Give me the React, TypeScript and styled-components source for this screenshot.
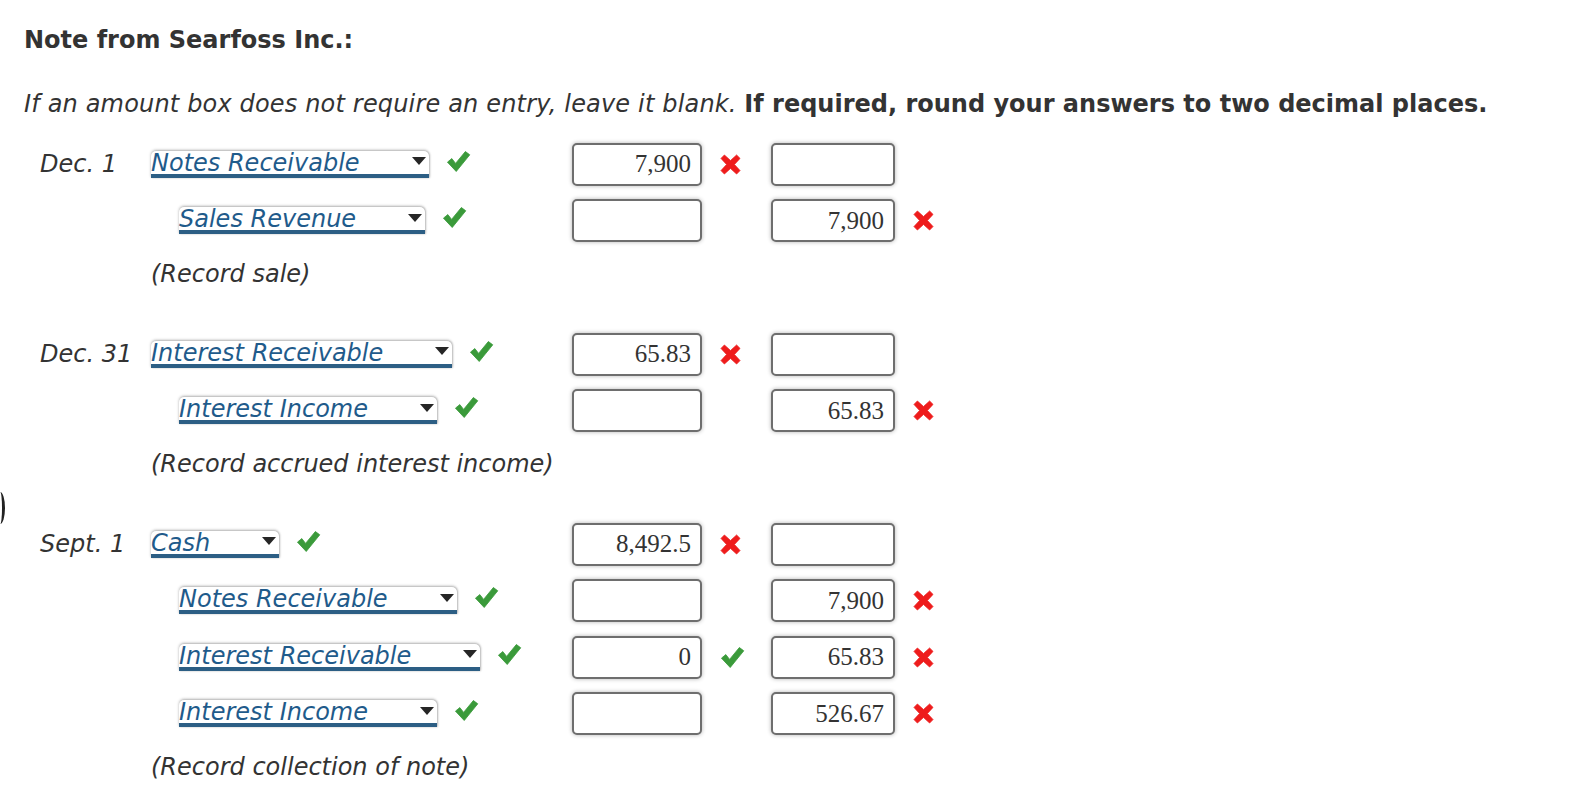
import React from "react";
import styled, { createGlobalStyle } from "styled-components";

const GlobalStyle = createGlobalStyle`
  html, body { margin: 0; padding: 0; background: #ffffff; }
  body {
    font-family: "DejaVu Sans", Verdana, sans-serif;
    color: #333333;
    overflow: hidden;
  }
`;

const Page = styled.div`
  position: relative;
  padding: 28px 0 0 24px;
  width: 1576px;
  height: 794px;
  box-sizing: border-box;
`;

const StrayParen = styled.span`
  position: absolute;
  left: -3px;
  top: 492px;
  width: 5px;
  height: 32px;
  border-right: 3px solid #222;
  border-radius: 0 60% 60% 0 / 0 50% 50% 0;
`;

const Heading = styled.h1`
  margin: 0;
  font-size: 24px;
  line-height: 24px;
  font-weight: bold;
  color: #333;
`;

const Instruction = styled.p`
  margin: 40px 0 0 0;
  font-size: 24px;
  line-height: 24px;
  color: #333;
  em { font-style: italic; letter-spacing: 0.17px; }
  strong { font-weight: bold; }
`;

const Journal = styled.div`
  margin: 20px 0 0 16px;
  display: flex;
  flex-direction: column;
`;

const Section = styled.div`
  display: flex;
  flex-direction: column;
  margin-bottom: 29px;
`;

const Row = styled.div`
  display: grid;
  grid-template-columns: 111px 421px 130px 69px 124px 60px;
  height: 56.5px;
  align-items: center;
`;

const DateLabel = styled.div`
  font-style: italic;
  font-size: 24px;
  line-height: 24px;
  color: #333;
  white-space: nowrap;
`;

const AccountCell = styled.div<{ $indent: boolean }>`
  display: flex;
  align-items: center;
  padding-left: ${(p) => (p.$indent ? "28px" : "0")};
`;

const Select = styled.div`
  display: inline-flex;
  align-items: center;
  box-sizing: border-box;
  height: 27px;
  padding-right: 3px;
  background: #fff;
  border-bottom: 4px solid #2c5e84;
  border-radius: 5px 5px 0 0;
  box-shadow: 0 -1px 3px rgba(0, 0, 0, 0.28), 1px 0 2px rgba(0, 0, 0, 0.18);
`;

const SelectText = styled.span`
  font-style: italic;
  font-size: 24px;
  line-height: 22px;
  color: #1f5b8b;
  white-space: nowrap;
  margin-top: 1px;
`;

const Arrow = styled.span`
  margin-left: 52px;
  width: 0;
  height: 0;
  border-left: 7px solid transparent;
  border-right: 7px solid transparent;
  border-top: 8px solid #262626;
  margin-top: -2px;
`;

const MarkSlot = styled.span<{ $gap: number }>`
  display: inline-flex;
  margin-left: ${(p) => p.$gap}px;
  margin-top: -6px;
`;

const AmountBox = styled.div`
  box-sizing: border-box;
  width: 100%;
  height: 43px;
  border: 2px solid #6e6e6e;
  border-radius: 5px;
  box-shadow: 0 0 4px rgba(0, 0, 0, 0.3);
  background: #fff;
  display: flex;
  align-items: center;
  justify-content: flex-end;
  padding-right: 9px;
  font-family: "Liberation Serif", "Times New Roman", serif;
  font-size: 25px;
  color: #333;
`;

const MarkCell = styled.div`
  display: flex;
  align-items: center;
  padding-left: 18px;
`;

const Memo = styled.div`
  height: 48px;
  line-height: 50px;
  padding-left: 111px;
  font-style: italic;
  font-size: 24px;
  color: #333;
  white-space: nowrap;
`;

const Check = () => (
  <svg width="25" height="25" viewBox="0 0 24 24" aria-hidden="true">
    <path
      d="M1.4 12.6 L5.6 9.2 L9.2 13.8 L18.6 2.4 L22.8 5.6 L9.8 21.6 Z"
      fill="#3a9a3a"
      stroke="#3a9a3a"
      strokeWidth="0.8"
      strokeLinejoin="round"
    />
  </svg>
);

const Cross = () => (
  <svg width="21" height="21" viewBox="0 0 21 21" aria-hidden="true">
    <path
      d="M1 4.4 L4.4 1 L10.5 6.6 L16.6 1 L20 4.4 L14.4 10.5 L20 16.6 L16.6 20 L10.5 14.4 L4.4 20 L1 16.6 L6.6 10.5 Z"
      fill="#ee1c1c"
      stroke="#ee1c1c"
      strokeWidth="0.8"
      strokeLinejoin="round"
    />
  </svg>
);

type Mark = "ok" | "bad" | null;

interface Line {
  date?: string;
  account: string;
  indent: boolean;
  debit?: string;
  debitMark?: Mark;
  credit?: string;
  creditMark?: Mark;
}

interface Entry {
  lines: Line[];
  memo: string;
}

const entries: Entry[] = [
  {
    lines: [
      { date: "Dec. 1", account: "Notes Receivable", indent: false, debit: "7,900", debitMark: "bad" },
      { account: "Sales Revenue", indent: true, credit: "7,900", creditMark: "bad" },
    ],
    memo: "(Record sale)",
  },
  {
    lines: [
      { date: "Dec. 31", account: "Interest Receivable", indent: false, debit: "65.83", debitMark: "bad" },
      { account: "Interest Income", indent: true, credit: "65.83", creditMark: "bad" },
    ],
    memo: "(Record accrued interest income)",
  },
  {
    lines: [
      { date: "Sept. 1", account: "Cash", indent: false, debit: "8,492.5", debitMark: "bad" },
      { account: "Notes Receivable", indent: true, credit: "7,900", creditMark: "bad" },
      { account: "Interest Receivable", indent: true, debit: "0", debitMark: "ok", credit: "65.83", creditMark: "bad" },
      { account: "Interest Income", indent: true, credit: "526.67", creditMark: "bad" },
    ],
    memo: "(Record collection of note)",
  },
];

const renderMark = (m?: Mark) => (m === "ok" ? <Check /> : m === "bad" ? <Cross /> : null);

export default function App() {
  return (
    <>
      <GlobalStyle />
      <Page>
        <StrayParen />
        <Heading>Note from Searfoss Inc.:</Heading>
        <Instruction>
          <em>If an amount box does not require an entry, leave it blank.</em>{" "}
          <strong>If required, round your answers to two decimal places.</strong>
        </Instruction>
        <Journal>
          {entries.map((entry, i) => (
            <Section key={i}>
              {entry.lines.map((line, j) => (
                <Row key={j}>
                  <DateLabel>{line.date ?? ""}</DateLabel>
                  <AccountCell $indent={line.indent}>
                    <Select>
                      <SelectText>{line.account}</SelectText>
                      <Arrow />
                    </Select>
                    <MarkSlot $gap={17}>
                      <Check />
                    </MarkSlot>
                  </AccountCell>
                  <AmountBox>{line.debit ?? ""}</AmountBox>
                  <MarkCell>{renderMark(line.debitMark)}</MarkCell>
                  <AmountBox>{line.credit ?? ""}</AmountBox>
                  <MarkCell>{renderMark(line.creditMark)}</MarkCell>
                </Row>
              ))}
              <Memo>{entry.memo}</Memo>
            </Section>
          ))}
        </Journal>
      </Page>
    </>
  );
}
